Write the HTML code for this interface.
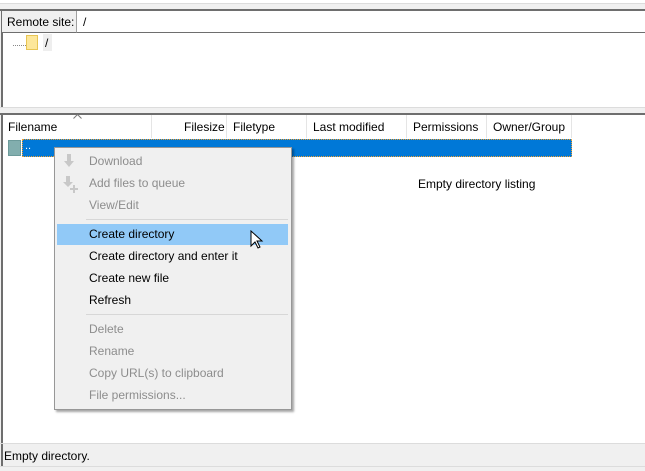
<!DOCTYPE html>
<html><head><style>
*{margin:0;padding:0;box-sizing:border-box}
body{width:645px;height:471px;background:#f0f0f0;font-family:"Liberation Sans",sans-serif;font-size:12px;color:#000;position:relative;overflow:hidden}
.a{position:absolute}
.mi{position:absolute;left:34px;font-size:12px}
.dis{color:#8d8d8d}
</style></head><body>
<div class="a" style="left:0;top:0;width:645px;height:3px;background:#fff"></div>
<div class="a" style="left:0;top:3px;width:645px;height:1px;background:#dcdcdc"></div>
<div class="a" style="left:0;top:9px;width:645px;height:2px;background:#6e6e6e"></div>
<div class="a" style="left:1px;top:11px;width:644px;height:97px;background:#fff;border-left:2px solid #6e6e6e"></div>
<div class="a" style="left:2px;top:11px;width:75px;height:22px;background:#f0f0f0;border-right:1px solid #a0a0a0;border-bottom:1px solid #6e6e6e;padding:4px 0 0 5px">Remote site:</div>
<div class="a" style="left:77px;top:32px;width:568px;height:1px;background:#6e6e6e"></div>
<div class="a" style="left:83px;top:15px">/</div>
<div class="a" style="left:13px;top:45px;width:13px;border-top:1px dotted #888"></div>
<div class="a" style="left:26px;top:35px;width:12px;height:15px;background:#fde79a;border:1px solid #e8c554"></div>
<div class="a" style="left:43px;top:34px;width:9px;height:17px;background:#eee"></div>
<div class="a" style="left:45px;top:36px">/</div>
<div class="a" style="left:0;top:107px;width:645px;height:1px;background:#dcdcdc"></div>
<div class="a" style="left:0;top:113px;width:645px;height:2px;background:#6e6e6e"></div>
<div class="a" style="left:1px;top:115px;width:644px;height:328px;background:#fff;border-left:2px solid #6e6e6e"></div>
<div class="a" style="left:3px;top:115px;width:569px;height:23px;background:#fff;border-right:1px solid #e5e5e5"></div>
<svg class="a" style="left:73px;top:114px" width="9" height="5"><path d="M0.5 4.5L4.5 0.5L8.5 4.5" fill="none" stroke="#777" stroke-width="1"/></svg>
<div class="a" style="left:8px;top:120px">Filename</div>
<div class="a" style="left:151px;top:115px;width:1px;height:23px;background:#e5e5e5"></div>
<div class="a" style="left:184px;top:120px">Filesize</div>
<div class="a" style="left:226px;top:115px;width:1px;height:23px;background:#e5e5e5"></div>
<div class="a" style="left:233px;top:120px">Filetype</div>
<div class="a" style="left:306px;top:115px;width:1px;height:23px;background:#e5e5e5"></div>
<div class="a" style="left:313px;top:120px">Last modified</div>
<div class="a" style="left:406px;top:115px;width:1px;height:23px;background:#e5e5e5"></div>
<div class="a" style="left:413px;top:120px">Permissions</div>
<div class="a" style="left:486px;top:115px;width:1px;height:23px;background:#e5e5e5"></div>
<div class="a" style="left:493px;top:120px">Owner/Group</div>
<div class="a" style="left:8px;top:140px;width:13px;height:16px;background:#82aeae;border:1px solid #6c9a9a"></div>
<div class="a" style="left:22px;top:139px;width:550px;height:18px;background:#0078d7;border:1px dotted #f0a030;color:#fff;padding-left:2px;font-size:11px">..</div>
<div class="a" style="left:418px;top:177px">Empty directory listing</div>
<div class="a" style="left:0;top:443px;width:645px;height:1px;background:#dcdcdc"></div>
<div class="a" style="left:1px;top:444px;width:2px;height:22px;background:#6e6e6e"></div>
<div class="a" style="left:4px;top:449px">Empty directory.</div>
<div class="a" style="left:0;top:466px;width:645px;height:1px;background:#dcdcdc"></div>
<div class="a" style="left:54px;top:147px;width:238px;height:263px;background:#f0f0f0;border:1px solid #979797;box-shadow:2px 2px 2px rgba(0,0,0,.35)">
 <svg class="a" style="left:6px;top:5px" width="16" height="16"><path d="M6 1h4v7h3l-5 6-5-6h3z" fill="#c8c8c8"/></svg>
 <svg class="a" style="left:6px;top:27px" width="18" height="18"><path d="M5 1h4v6h3l-5 5-5-5h3z" fill="#c8c8c8"/><path d="M12 10h2v3h3v2h-3v3h-2v-3h-3v-2h3z" fill="#c8c8c8"/></svg>
 <div class="mi dis" style="top:6px">Download</div>
 <div class="mi dis" style="top:28px">Add files to queue</div>
 <div class="mi dis" style="top:50px">View/Edit</div>
 <div class="a" style="left:31px;top:71px;width:202px;height:1px;background:#d7d7d7"></div>
 <div class="a" style="left:2px;top:76px;width:231px;height:21px;background:#91c9f7"></div>
 <div class="mi" style="top:79px">Create directory</div>
 <div class="mi" style="top:101px">Create directory and enter it</div>
 <div class="mi" style="top:123px">Create new file</div>
 <div class="mi" style="top:145px">Refresh</div>
 <div class="a" style="left:31px;top:166px;width:202px;height:1px;background:#d7d7d7"></div>
 <div class="mi dis" style="top:174px">Delete</div>
 <div class="mi dis" style="top:196px">Rename</div>
 <div class="mi dis" style="top:218px">Copy URL(s) to clipboard</div>
 <div class="mi dis" style="top:240px">File permissions...</div>
</div>
<svg class="a" style="left:250px;top:230px" width="14" height="20"><path d="M1 1v15l4-4 3 6 2-1-3-6h5z" fill="#fff" stroke="#000" stroke-width="1"/></svg>
</body></html>
